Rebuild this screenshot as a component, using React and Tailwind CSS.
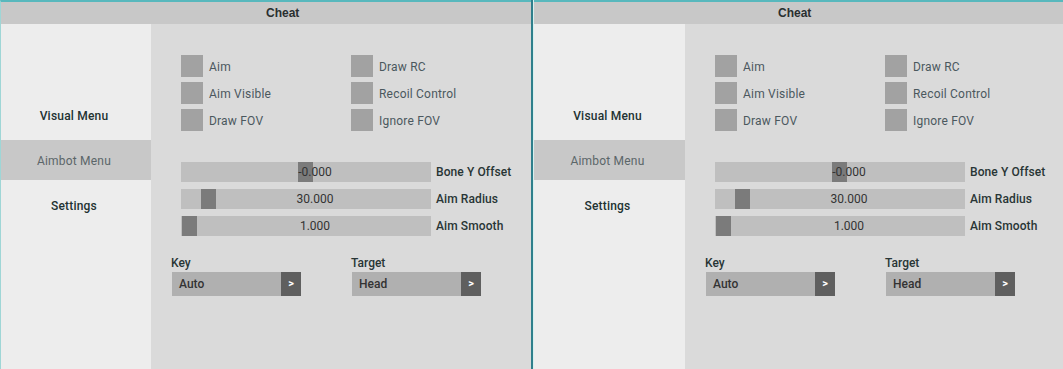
import React from 'react';

const checks = [
  ['Aim', 'Draw RC'],
  ['Aim Visible', 'Recoil Control'],
  ['Draw FOV', 'Ignore FOV'],
];

const sliders = [
  { label: 'Bone Y Offset', value: '-0.000', thumb: 117 },
  { label: 'Aim Radius', value: '30.000', thumb: 20 },
  { label: 'Aim Smooth', value: '1.000', thumb: 1 },
];

const menu = [
  { name: 'Visual Menu', active: false },
  { name: 'Aimbot Menu', active: true },
  { name: 'Settings', active: false },
];

function Check({ label }) {
  return (
    <div className="flex items-center gap-[6px] w-[170px]">
      <div className="w-[22px] h-[22px] bg-[#a2a2a2]" />
      <span className="text-[12px] text-[#4b585e] tracking-[0.2px] pt-[2px]">{label}</span>
    </div>
  );
}

function Slider({ label, value, thumb }) {
  return (
    <div className="flex items-center gap-[5px]">
      <div className="relative w-[250px] h-[20px] bg-[#bfbfbf]">
        <div className="absolute top-0 h-[20px] w-[15px] bg-[#7b7b7b]" style={{ left: thumb }} />
        <div className="relative h-full flex items-center justify-center pl-[18px] text-[12px] text-[#333]">
          {value}
        </div>
      </div>
      <span className="text-[12px] font-medium text-[#283535] tracking-[0.1px]">{label}</span>
    </div>
  );
}

function Select({ label, value }) {
  return (
    <div className="flex flex-col w-[180px]">
      <span className="text-[12px] font-medium text-[#283535] leading-[14px] mb-[2px]">{label}</span>
      <div className="ml-[1px] flex w-[129px] h-[24px] bg-[#b0b0b0]">
        <span className="flex-1 flex items-center pl-[7px] text-[12px] font-medium text-[#333]">{value}</span>
        <div className="w-[20px] h-full bg-[#5f5f5f] flex items-center justify-center text-white text-[11px] font-bold">
          &gt;
        </div>
      </div>
    </div>
  );
}

function Window({ titlePad, className }) {
  return (
    <div className={`flex flex-col h-full border-t-2 border-[#58b8bd] ${className}`}>
      <div className={`h-[22px] bg-[#c8c8c8] flex items-center ${titlePad}`}>
        <span className="text-[12px] font-bold text-[#2a2f30]" style={{ fontFamily: '"Liberation Sans", Arial, sans-serif' }}>Cheat</span>
      </div>
      <div className="flex flex-1">
        {/* Sidebar */}
        <div className="w-[151px] bg-[#ededed] pt-[71px] flex flex-col gap-[5px]">
          {menu.map(m => (
            <div
              key={m.name}
              className={`h-[40px] flex items-center justify-center pr-[4px] pt-[1px] text-[12px] tracking-[0.2px] ${
                m.active ? 'bg-[#c8c8c8] text-[#5b6669]' : 'font-medium text-[#223232]'
              }`}
            >
              {m.name}
            </div>
          ))}
        </div>

        {/* Content */}
        <div className="flex-1 bg-[#dadada] pt-[31px] pl-[30px]">
          <div className="flex flex-col gap-[5px]">
            {checks.map((row, i) => (
              <div key={i} className="flex">
                {row.map(c => <Check key={c} label={c} />)}
              </div>
            ))}
          </div>

          <div className="flex flex-col gap-[7px] mt-[31px]">
            {sliders.map(s => <Slider key={s.label} {...s} />)}
          </div>

          <div className="flex mt-[20px] -ml-[10px]">
            <Select label="Key" value="Auto" />
            <Select label="Target" value="Head" />
          </div>
        </div>
      </div>
    </div>
  );
}

export default function App() {
  return (
    <div className="w-[1063px] h-[369px] flex overflow-hidden bg-[#dadada]" style={{ fontFamily: 'Roboto, "Liberation Sans", sans-serif' }}>
      <Window titlePad="pl-[265px]" className="w-[531px] shrink-0 border-l border-l-[#9fd6d6]" />
      <div className="w-[3px] shrink-0 flex">
        <div className="w-[2px] bg-[#2f7f8c]" />
        <div className="w-[1px] bg-[#d8f0ee]" />
      </div>
      <Window titlePad="pl-[244px]" className="flex-1" />
    </div>
  );
}
